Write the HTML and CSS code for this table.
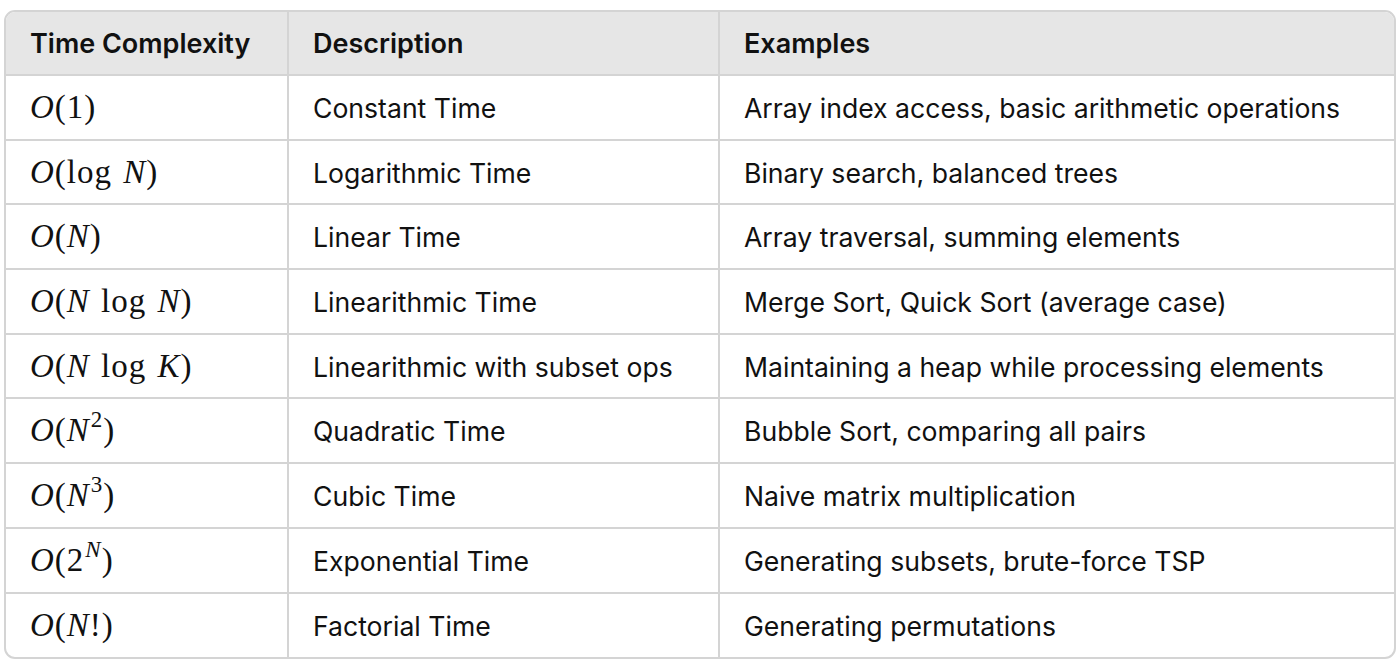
FILE: index.html
```html
<!DOCTYPE html>
<html>
<head>
<meta charset="utf-8">
<link rel="stylesheet" href="styles.css">
</head>
<body>
<div class="wrap">
<table class="tbl">
<colgroup><col class="c1"><col class="c2"><col class="c3"></colgroup>
<thead>
<tr><th>Time Complexity</th><th>Description</th><th>Examples</th></tr>
</thead>
<tbody>
<tr><td class="m"><i>O</i>(1)</td><td>Constant Time</td><td>Array index access, basic arithmetic operations</td></tr>
<tr><td class="m"><i>O</i>(log <i>N</i>)</td><td>Logarithmic Time</td><td>Binary search, balanced trees</td></tr>
<tr><td class="m"><i>O</i>(<i>N</i>)</td><td>Linear Time</td><td>Array traversal, summing elements</td></tr>
<tr><td class="m"><i>O</i>(<i>N</i> log <i>N</i>)</td><td>Linearithmic Time</td><td>Merge Sort, Quick Sort (average case)</td></tr>
<tr><td class="m"><i>O</i>(<i>N</i> log <i>K</i>)</td><td>Linearithmic with subset ops</td><td>Maintaining a heap while processing elements</td></tr>
<tr><td class="m"><i>O</i>(<i>N</i><sup>2</sup>)</td><td>Quadratic Time</td><td>Bubble Sort, comparing all pairs</td></tr>
<tr><td class="m"><i>O</i>(<i>N</i><sup>3</sup>)</td><td>Cubic Time</td><td>Naive matrix multiplication</td></tr>
<tr><td class="m"><i>O</i>(2<sup><i>N</i></sup>)</td><td>Exponential Time</td><td>Generating subsets, brute-force TSP</td></tr>
<tr><td class="m"><i>O</i>(<i>N</i>!)</td><td>Factorial Time</td><td>Generating permutations</td></tr>
</tbody>
</table>
</div>
</body>
</html>
```
FILE: styles.css
```css
html, body {
  margin: 0;
  padding: 0;
  background: #ffffff;
}
body {
  padding: 10px 4px 0 4px;
  font-family: Inter, "Noto Sans", sans-serif;
  color: #111111;
}
.wrap {
  width: 1392px;
  box-sizing: border-box;
  border: 2px solid #d4d4d4;
  border-radius: 11px;
  overflow: hidden;
}
.tbl {
  width: 100%;
  border-collapse: collapse;
  table-layout: fixed;
}
.c1 { width: 282px; }
.c2 { width: 431px; }
.c3 { width: auto; }
th, td {
  text-align: left;
  padding: 0 0 0 24px;
  border-left: 2px solid #d4d4d4;
  border-top: 2px solid #d4d4d4;
  box-sizing: border-box;
  vertical-align: middle;
  white-space: nowrap;
}
th:first-child, td:first-child { border-left: none; }
thead th { border-top: none; }
th {
  background: #e6e6e6;
  font-size: 27px;
  font-weight: 600;
  height: 63px;
}
td {
  font-size: 26.6px;
  font-weight: 400;
  height: 64.7px;
  padding-top: 1px;
}
td.m {
  font-family: "Liberation Serif", "Times New Roman", serif;
  font-size: 33px;
  letter-spacing: 1px;
  word-spacing: 2px;
  padding-left: 24px;
  padding-top: 0;
}
td.m i { font-style: italic; }
td.m sup {
  font-size: 23px;
  line-height: 0;
  vertical-align: 14px;
  margin-left: 1px;
}
```
